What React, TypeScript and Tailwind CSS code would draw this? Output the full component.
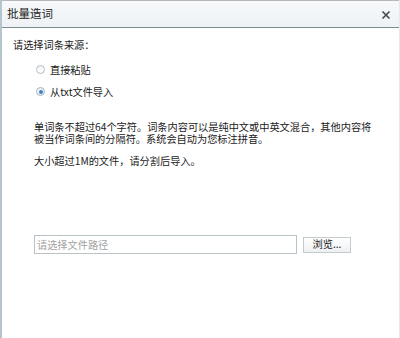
import React from "react";

const font = { fontFamily: '"Noto Sans CJK SC", "Liberation Sans", sans-serif' };

export default function App() {
  return (
    <div
      className="w-[400px] h-[338px] bg-white flex flex-col border-l-2 border-[#b3c6cb] border-r border-r-[#e4eaec] overflow-hidden text-[#1a1a1a]"
      style={font}
    >
      {/* Title bar */}
      <div className="h-[28px] shrink-0 flex items-center justify-between pl-[5px] pr-[8px] bg-gradient-to-b from-[#f7f9fb] to-[#eef2f5] border-t border-[#b5b9bb] border-b border-b-[#7c8c92]">
        <span className="text-[11.5px] leading-none text-[#222]">批量造词</span>
        <svg width="10" height="10" viewBox="0 0 10 10" className="mt-[1px]">
          <path d="M1.5 1.5 L8.5 8.5 M8.5 1.5 L1.5 8.5" stroke="#4a4a4a" strokeWidth="1.7" />
        </svg>
      </div>

      {/* Body */}
      <div className="flex flex-col pl-[11px] pt-[10px] text-[10.2px] leading-[13px]">
        <div>请选择词条来源：</div>

        <div className="flex flex-col gap-[9px] pl-[23px] mt-[12px]">
          <label className="flex items-center gap-[5px]">
            <span className="w-[9px] h-[9px] rounded-full border border-[#b4bcc2] bg-gradient-to-b from-[#f3f5f7] to-white" />
            <span>直接粘贴</span>
          </label>
          <label className="flex items-center gap-[5px]">
            <span className="w-[9px] h-[9px] rounded-full border border-[#a9b5bd] bg-[#eef3f7] flex items-center justify-center">
              <span className="w-[4px] h-[4px] rounded-full bg-[#3f7fc8]" />
            </span>
            <span>从txt文件导入</span>
          </label>
        </div>

        <div className="pl-[21px] mt-[23px] leading-[12px]">
          <p>
            单词条不超过64个字符。词条内容可以是纯中文或中英文混合，其他内容将
            <br />
            被当作词条间的分隔符。系统会自动为您标注拼音。
          </p>
          <p className="mt-[10px]">大小超过1M的文件，请分割后导入。</p>
        </div>

        <div className="pl-[21px] mt-[68px] flex items-center gap-[6px]">
          <div className="w-[263px] h-[19px] border border-[#b9c3c7] bg-white flex items-center pl-[2px] text-[#a3a3a3]">
            请选择文件路径
          </div>
          <button className="w-[48px] h-[16px] border border-[#c3cbcf] bg-gradient-to-b from-white to-[#edf0f2] flex items-center justify-center text-[10.2px] leading-none text-[#1a1a1a]">
            浏览...
          </button>
        </div>
      </div>
    </div>
  );
}
